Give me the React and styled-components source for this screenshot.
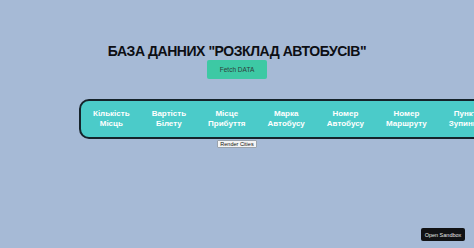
import React from "react";
import styled, { createGlobalStyle } from "styled-components";

const columns = [
  ["Кількість", "Місць"],
  ["Вартість", "Білету"],
  ["Місце", "Прибуття"],
  ["Марка", "Автобусу"],
  ["Номер", "Автобусу"],
  ["Номер", "Маршруту"],
  ["Пункт", "Зупинки"],
  ["Час", "Відправлення"],
];

export default function App() {
  return (
    <>
      <GlobalStyle />
      <Page>
        <Title>БАЗА ДАННИХ "РОЗКЛАД АВТОБУСІВ"</Title>
        <FetchButton>Fetch DATA</FetchButton>
        <BarRow>
          <Bar>
            {columns.map(([top, bottom], i) => (
              <Column key={i}>
                {top}
                <br />
                {bottom}
              </Column>
            ))}
          </Bar>
        </BarRow>
        <RenderButton>Render Cities</RenderButton>
      </Page>
      <SandboxButton>Open Sandbox</SandboxButton>
    </>
  );
}

const GlobalStyle = createGlobalStyle`
  html, body {
    margin: 0;
    padding: 0;
    background: #a6bad6;
    overflow: hidden;
    font-family: "Liberation Sans", Arial, sans-serif;
  }
`;

const Page = styled.div`
  width: 474px;
  height: 248px;
  overflow: hidden;
  display: flex;
  flex-direction: column;
  align-items: center;
  padding-top: 42px;
  box-sizing: border-box;
`;

const Title = styled.h1`
  margin: 0;
  font-size: 14px;
  line-height: 18px;
  letter-spacing: -0.45px;
  font-weight: 700;
  color: #0d0f14;
  white-space: nowrap;
`;

const FetchButton = styled.button`
  width: 60px;
  height: 19px;
  border: none;
  border-radius: 2px;
  background: #3dc9a4;
  color: #2e3d3a;
  font-family: "Liberation Sans", Arial, sans-serif;
  font-size: 6.5px;
  padding: 0;
`;

const BarRow = styled.div`
  align-self: stretch;
  display: flex;
  padding-left: 79px;
  margin-top: 20px;
`;

const Bar = styled.div`
  flex-shrink: 0;
  display: flex;
  align-items: center;
  gap: 22px;
  height: 40px;
  box-sizing: border-box;
  padding: 0 12px;
  border: 2px solid #15232b;
  border-radius: 10px;
  background: #4bcbc9;
`;

const Column = styled.div`
  color: #ffffff;
  font-weight: 700;
  font-size: 8px;
  line-height: 10px;
  text-align: center;
  white-space: nowrap;
`;

const RenderButton = styled.button`
  margin-top: 1px;
  height: 8px;
  padding: 0 2px;
  border: 1px solid #9aa3ad;
  border-radius: 1px;
  background: #f4f4f4;
  color: #111;
  font-family: "Liberation Sans", Arial, sans-serif;
  font-size: 5.5px;
  line-height: 6px;
`;

const SandboxButton = styled.button`
  position: fixed;
  right: 9px;
  bottom: 7px;
  width: 44px;
  height: 13px;
  padding: 0;
  border: none;
  border-radius: 2px;
  background: #111214;
  color: #e8e8e8;
  font-family: "Liberation Sans", Arial, sans-serif;
  font-size: 5.5px;
`;
